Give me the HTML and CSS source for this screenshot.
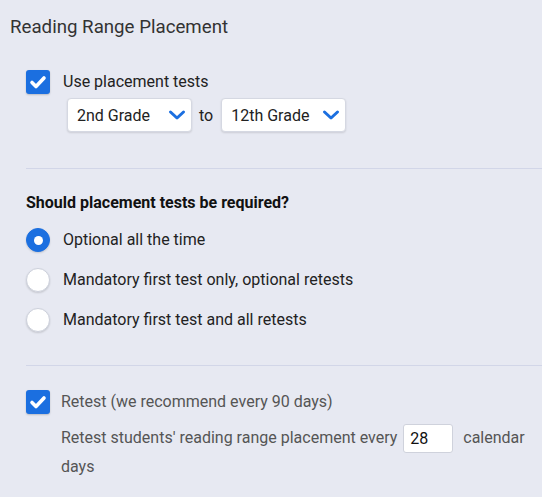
FILE: index.html
```html
<!DOCTYPE html>
<html>
<head>
<meta charset="utf-8">
<link rel="stylesheet" href="styles.css">
</head>
<body>
<div class="panel">
  <h2 class="title">Reading Range Placement</h2>

  <div class="section">
    <div class="check-row">
      <span class="checkbox"><svg viewBox="0 0 24 24" width="24" height="24"><path d="M6 12.5l4 4 8-8.5" fill="none" stroke="#fff" stroke-width="3.6" stroke-linecap="round" stroke-linejoin="round"/></svg></span>
      <span class="label">Use placement tests</span>
    </div>
    <div class="select-row">
      <div class="select"><span>2nd Grade</span><svg class="chev" viewBox="0 0 18 12" width="18" height="12"><path d="M2.5 3l6.5 6 6.5-6" fill="none" stroke="#1b6fe0" stroke-width="3" stroke-linecap="round" stroke-linejoin="round"/></svg></div>
      <span class="to">to</span>
      <div class="select"><span>12th Grade</span><svg class="chev" viewBox="0 0 18 12" width="18" height="12"><path d="M2.5 3l6.5 6 6.5-6" fill="none" stroke="#1b6fe0" stroke-width="3" stroke-linecap="round" stroke-linejoin="round"/></svg></div>
    </div>
  </div>

  <hr class="divider divider-1">

  <div class="section">
    <div class="question">Should placement tests be required?</div>
    <div class="radios">
      <div class="radio-row"><span class="radio selected"></span><span class="label">Optional all the time</span></div>
      <div class="radio-row"><span class="radio"></span><span class="label">Mandatory first test only, optional retests</span></div>
      <div class="radio-row"><span class="radio"></span><span class="label">Mandatory first test and all retests</span></div>
    </div>
  </div>

  <hr class="divider divider-2">

  <div class="section">
    <div class="check-row retest">
      <span class="checkbox"><svg viewBox="0 0 24 24" width="24" height="24"><path d="M6 12.5l4 4 8-8.5" fill="none" stroke="#fff" stroke-width="3.6" stroke-linecap="round" stroke-linejoin="round"/></svg></span>
      <span class="label muted">Retest (we recommend every 90 days)</span>
    </div>
    <p class="retest-text">Retest students' reading range placement every <input class="days" type="text" value="28"> calendar days</p>
  </div>
</div>
</body>
</html>
```

FILE: styles.css
```css
* { box-sizing: border-box; }
html, body {
  margin: 0;
  background: #e7e9f2;
}
body {
  font-family: Roboto, "Liberation Sans", sans-serif;
  color: #222;
  width: 542px;
  height: 497px;
  overflow: hidden;
}
.title {
  margin: 0;
  padding: 14px 10px 0;
  font-size: 18.7px;
  line-height: 26px;
  font-weight: 400;
  color: #333;
}
.section {
  margin-left: 26px;
}
.check-row {
  display: flex;
  align-items: center;
  gap: 13px;
  height: 24px;
  margin-top: 30px;
}
.checkbox {
  width: 24px;
  height: 24px;
  border-radius: 3px;
  background: #1b6fe0;
  display: block;
  flex: none;
  box-shadow: 0 1px 2px rgba(0,0,0,0.2);
}
.checkbox svg { display: block; }
.label {
  font-size: 16px;
  line-height: 20px;
  color: #222;
}
.muted { color: #555; }
.select-row {
  display: flex;
  align-items: center;
  margin-top: 4px;
  margin-left: 41px;
}
.select {
  width: 125px;
  height: 34px;
  background: #fff;
  border: 1px solid #d5d8e2;
  border-radius: 4px;
  box-shadow: 0 1px 2px rgba(0,0,0,0.12);
  display: flex;
  align-items: center;
  justify-content: space-between;
  padding: 0 5px 0 9px;
  font-size: 16px;
  color: #222;
}
.chev { display: block; }
.to {
  font-size: 16px;
  margin: 0 8px 0 7px;
}
.divider {
  border: 0;
  border-top: 1px solid #d2d6e8;
  margin: 0 0 0 26px;
}
.divider-1 { margin-top: 36px; }
.question {
  margin-top: 24px;
  font-size: 16px;
  line-height: 20px;
  font-weight: 700;
  color: #111;
}
.radios {
  display: flex;
  flex-direction: column;
  gap: 16px;
  margin-top: 15px;
}
.radio-row {
  display: flex;
  align-items: center;
  gap: 13px;
  height: 24px;
}
.radio {
  width: 24px;
  height: 24px;
  border-radius: 50%;
  background: #fff;
  border: 1px solid #cdd1dc;
  box-shadow: 0 1px 2px rgba(0,0,0,0.15);
  flex: none;
  display: flex;
  align-items: center;
  justify-content: center;
}
.radio.selected {
  background: #1b6fe0;
  border-color: #1b6fe0;
}
.radio.selected::after {
  content: "";
  width: 9px;
  height: 9px;
  border-radius: 50%;
  background: #fff;
}
.divider-2 { margin-top: 33px; }
.retest {
  margin-top: 24px;
  gap: 11px;
}
.retest-text {
  margin: 10px 0 0 35px;
  font-size: 16px;
  line-height: 28px;
  color: #555;
}
.days {
  width: 50px;
  height: 29px;
  border: 1px solid #cfd2dc;
  border-radius: 3px;
  font-family: inherit;
  font-size: 16px;
  color: #111;
  padding: 0 6px;
  margin: 0 6px 0 2px;
  vertical-align: middle;
  background: #fff;
}
```
